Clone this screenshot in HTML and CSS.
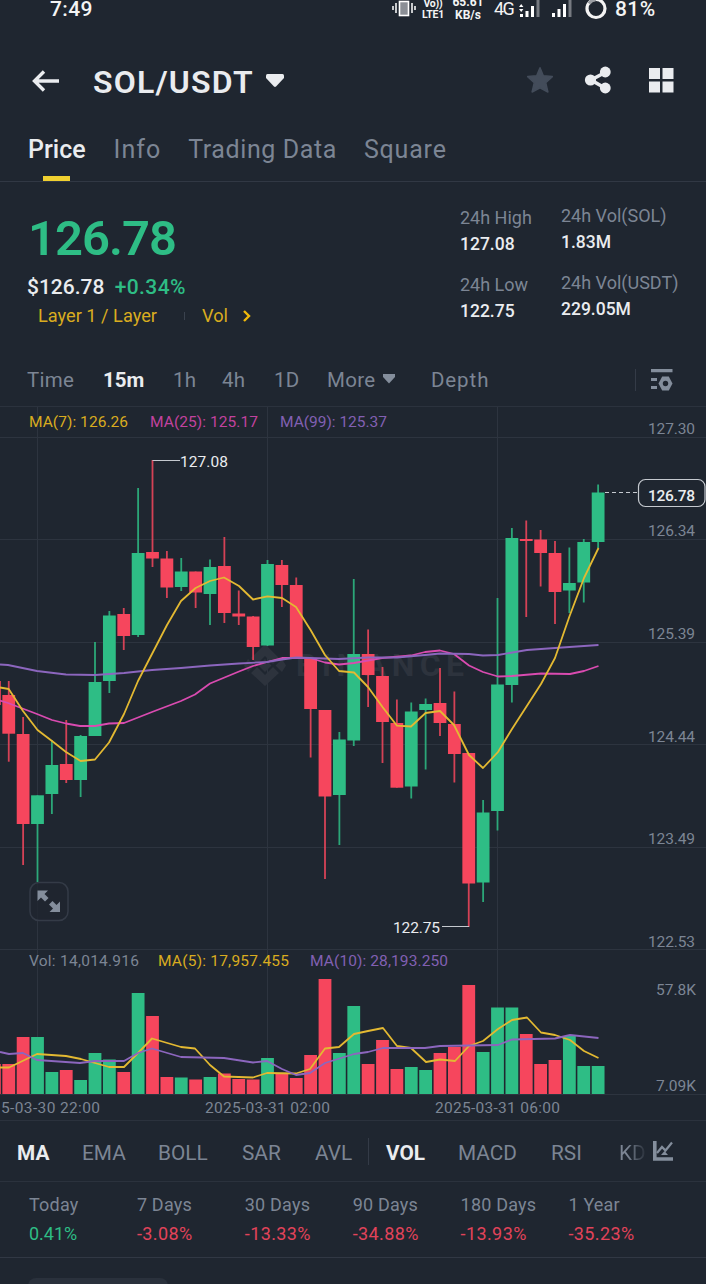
FILE: index.html
```html
<!DOCTYPE html>
<html lang="en">
<head>
    <meta charset="UTF-8">
    <meta name="viewport" content="width=device-width, initial-scale=1.0">
    <title>SOL/USDT</title>
    <link rel="stylesheet" href="styles.css">
</head>
<body>
    <div class="status-bar">
        <span class="clock">7:49</span>
        <div class="status-icons">
            <svg class="vibrate" width="24" height="18" viewBox="0 0 24 18">
                <rect x="7.5" y="1.5" width="9" height="14" fill="#8b8f96" stroke="#fff" stroke-width="1.6"/>
                <path d="M1 6v4M4 3v10M20 3v10M23 6v4" stroke="#fff" stroke-width="1.5"/>
            </svg>
            <div class="stack volte"><span>Vo))</span><span>LTE1</span></div>
            <div class="stack speed"><span>65.61</span><span>KB/s</span></div>
            <span class="net">4G</span>
            <svg class="signal" width="21" height="18" viewBox="0 0 21 18">
                <path d="M0 7l2.2-3 2.2 3zM0 9l2.2 3 2.2-3z" fill="#fff"/>
                <path d="M1 14h3v3H1zM6.500 11h3v6h-3zM12 6h3v11h-3z" fill="#fff"/>
                <path d="M17.500 0h3v17h-3z" fill="#767a81"/>
            </svg>
            <svg class="signal" width="21" height="18" viewBox="0 0 21 18">
                <path d="M1 13h3v4H1zM6.500 9h3v8h-3zM12 4h3v13h-3z" fill="#fff"/>
                <path d="M17.500 0h3v17h-3z" fill="#767a81"/>
            </svg>
            <svg class="battery" width="22" height="22" viewBox="0 0 22 22">
                <circle cx="11" cy="10.500" r="9" fill="none" stroke="#f4f4f4" stroke-width="3.2"/>
                <path d="M11 1.500a9 9 0 0 0-7 4" fill="none" stroke="#9a9da2" stroke-width="3.2"/>
            </svg>
            <span class="percent">81%</span>
        </div>
    </div>

    <header class="header">
        <svg class="back" width="28" height="22" viewBox="0 0 28 22">
            <path d="M27 11H2.500M12 1.500L2.500 11l9.500 9.500" fill="none" stroke="#eaecef" stroke-width="3.4"/>
        </svg>
        <h1>SOL/USDT</h1>
        <svg class="caret" width="18" height="14" viewBox="0 0 18 14">
            <path d="M1.500 0h15q1.500 0 1.500 1.500v2.500L10 12.500q-1 .8-2 0L0 4V1.500Q0 0 1.500 0z" fill="#eaecef"/>
        </svg>
        <div class="actions">
            <svg width="28" height="28" viewBox="0 0 28 28">
                <path d="M14 1.800l3.300 8 9 .800-6.600 6.100 2.200 9.300-7.900-4.200L6.100 26l2.200-9.300-6.600-6.100 9-.800z" fill="#434c5a" stroke="#434c5a" stroke-width="1.500" stroke-linejoin="round"/>
            </svg>
            <svg width="28" height="28" viewBox="0 0 28 28">
                <path d="M21 6.500L7 14l14 8" fill="none" stroke="#eaecef" stroke-width="3.6"/>
                <circle cx="21.300" cy="6" r="5.400" fill="#eaecef"/>
                <circle cx="6.500" cy="14" r="5.600" fill="#eaecef"/>
                <circle cx="21.300" cy="22" r="5.400" fill="#eaecef"/>
            </svg>
            <svg width="26" height="26" viewBox="0 0 26 26">
                <path d="M1 1h11v11H1zM14.500 1h11v11h-11zM1 14.500h11v11H1zM14.500 14.500h11v11h-11z" fill="#eaecef"/>
            </svg>
        </div>
    </header>

    <nav class="tabs">
        <a class="active">Price</a>
        <a>Info</a>
        <a>Trading Data</a>
        <a>Square</a>
    </nav>

    <section class="overview">
        <div class="price-box">
            <div class="price">126.78</div>
            <div class="fiat"><span>$126.78</span> <span class="up">+0.34%</span></div>
            <div class="tags">
                <span>Layer 1 / Layer</span>
                <i></i>
                <span>Vol</span>
                <svg width="8" height="12" viewBox="0 0 8 12"><path d="M1 1l5 5-5 5" fill="none" stroke="#f0b90b" stroke-width="2.4"/></svg>
            </div>
        </div>
        <div class="stats">
            <dl><dt>24h High</dt><dd>127.08</dd></dl>
            <dl><dt>24h Low</dt><dd>122.75</dd></dl>
        </div>
        <div class="stats vol">
            <dl><dt>24h Vol(SOL)</dt><dd>1.83M</dd></dl>
            <dl><dt>24h Vol(USDT)</dt><dd>229.05M</dd></dl>
        </div>
    </section>

    <div class="intervals">
        <a>Time</a>
        <a class="active">15m</a>
        <a>1h</a>
        <a>4h</a>
        <a>1D</a>
        <a>More <svg width="12" height="10" viewBox="0 0 12 10"><path d="M0 0h12v3L6 9.500 0 3z" fill="#848e9c"/></svg></a>
        <a>Depth</a>
        <div class="settings">
            <svg width="22" height="22" viewBox="0 0 22 22">
                <path d="M0 0h21.500v3.200H0zM0 9h6v3H0zM0 17h6v3H0z" fill="#848e9c"/>
                <path d="M11.200 7.500h6.600l3.700 7-3.700 7h-6.600l-3.700-7z" fill="#848e9c"/>
                <circle cx="14.500" cy="14.500" r="2.700" fill="#1f2630"/>
            </svg>
        </div>
    </div>

    <div class="chart">
        <svg id="chart" width="706" height="713" viewBox="0 407 706 713"></svg>
    </div>

    <div class="indicators">
        <a class="active">MA</a>
        <a>EMA</a>
        <a>BOLL</a>
        <a>SAR</a>
        <a>AVL</a>
        <a class="active sub">VOL</a>
        <a>MACD</a>
        <a>RSI</a>
        <a class="fade">KD</a>
        <svg width="20" height="20" viewBox="0 0 20 20">
            <path d="M1.800 0v18H20" fill="none" stroke="#848e9c" stroke-width="3.6"/>
            <path d="M4 12l5-6 3.500 3.500L19 1.500" fill="none" stroke="#848e9c" stroke-width="2.200"/>
            <path d="M8 14l3.500-4 3.500 4z" fill="#848e9c"/>
        </svg>
    </div>

    <div class="performance">
        <div><span>Today</span><b class="up">0.41%</b></div>
        <div><span>7 Days</span><b>-3.08%</b></div>
        <div><span>30 Days</span><b>-13.33%</b></div>
        <div><span>90 Days</span><b>-34.88%</b></div>
        <div><span>180 Days</span><b>-13.93%</b></div>
        <div><span>1 Year</span><b>-35.23%</b></div>
    </div>

    <div class="bottom"><div class="chip"></div></div>

    <script>
        const step = 14.375;
        const firstX = 8.75;
        const volumeBase = 1094;

        // [direction, high, body top, body bottom, low, volume top]
        const candles = [
            ['d', 681, 695, 733.7, 761.7, 1064],
            ['d', 717, 734, 824, 865, 1037],
            ['u', 795.3, 795.3, 824, 882, 1037],
            ['u', 740, 765, 794, 814, 1072],
            ['d', 720, 764, 780, 783, 1070],
            ['u', 735, 736, 780, 797, 1080],
            ['u', 642, 682, 736, 736, 1053],
            ['u', 611, 615.5, 681, 693, 1059.5],
            ['d', 608, 614, 636, 650, 1072],
            ['u', 488, 553, 635, 637, 993],
            ['d', 460, 552, 558.5, 567, 1016],
            ['d', 551, 558.5, 587.5, 598, 1077],
            ['u', 558, 571.5, 587, 591, 1077.5],
            ['d', 571.5, 571.5, 592.5, 608, 1079.5],
            ['u', 559.5, 567, 594, 625, 1077],
            ['d', 537, 566, 613, 623, 1073.5],
            ['d', 590.5, 613.5, 616.5, 625, 1079],
            ['d', 616, 616.5, 647, 660, 1079.5],
            ['u', 560, 564, 645.5, 646, 1058],
            ['d', 560, 565, 585, 607, 1073.5],
            ['d', 577.5, 585, 658, 658, 1078],
            ['d', 658, 658, 709, 757.5, 1055],
            ['d', 710, 710, 796.5, 879, 979],
            ['u', 732, 739.5, 795, 845, 1053],
            ['u', 579, 654, 740.5, 746, 1006],
            ['d', 629.5, 654, 675, 707, 1064],
            ['d', 667, 676, 722, 763, 1040],
            ['d', 699.5, 723, 787.7, 787.7, 1069],
            ['u', 702.5, 711.5, 786.5, 798.5, 1067],
            ['u', 698.5, 704, 710, 769.5, 1070],
            ['d', 668, 703, 723, 736, 1053],
            ['d', 691.5, 724, 754, 782.5, 1047],
            ['d', 753, 753, 883.5, 927, 985],
            ['u', 800, 812.5, 882.5, 902, 1052],
            ['u', 598, 684.5, 811, 830.5, 1007.5],
            ['u', 528, 538, 685, 702.5, 1007.5],
            ['d', 520.5, 539, 541, 617, 1034],
            ['d', 530, 539.5, 553, 586.5, 1064],
            ['d', 541, 553, 592, 624, 1060],
            ['u', 547.5, 583, 590.5, 613, 1036],
            ['u', 539, 542, 582.5, 602.5, 1066],
            ['u', 484.5, 492.5, 542, 548, 1066]
        ];

        const lines = {
            ma7: '0,687.5 8.7,689 23,711 37.5,730 52,741 66,752 80.6,761 95,759.5 109,742.5 124,714 138,681 152.5,653 167,625 181,601 195.6,588 210,581 224,577.5 239,586 253,599.5 267.5,596.3 282,598 296,607 310.6,630 325,655 339,671 354,672.5 368,687 382.5,707 397,725.7 411,726.5 425.6,713 440,711 454,725 469,755 483,768 498,752 512,729 541,684 555,658 569.6,616 584,578 598.5,548',
            ma25: '0,700.5 8,703 37,714 52,720 66,723.5 80,726 95,726 109,723.5 124,723 152,712 181,701 195,694.5 210,683.5 239,671.5 253,666 267,662 282,658 310,658 325,662.5 339,664.5 354,663 382,658 411,655.5 425,652 440,650.5 454,654 469,665.5 483,672 498,676.5 512,676 541,673.5 570,674 584,671 598.5,666',
            ma99: '0,664.5 8,665 37,671 66,674.5 95,675 124,673 152,670 181,668 210,665.5 239,663.5 267,662 282,659.5 296,657.5 310,658 339,659 368,657.5 397,657.5 425,655 440,653.5 469,654 483,655.5 498,655 527,650 555,648 584,646 598.5,645',
            ma5v: '0,1067.5 9,1067.5 37,1054 66,1056 81,1059 109,1067 124,1067 138,1053 152,1038.5 181,1047 195,1048.5 210,1065 224,1076.5 253,1077.5 267,1073 296,1073.5 310,1069 325,1048.5 339,1047 354,1034 368,1031 383,1028 397,1046 411,1048 426,1062 440,1059.5 455,1061 469,1046 483,1041 498,1029 512,1020 527,1017.5 541,1032.5 555,1035 570,1040 584,1051 598.5,1058',
            ma10v: '0,1052 9,1054 23,1053 37,1060 80,1063 95,1061 124,1061 138,1053 152,1048.5 181,1057 224,1058 253,1062.5 267,1061 282,1069 296,1075 310,1073 325,1063 354,1054 368,1052 383,1048 425,1048 440,1046 498,1045 512,1039.5 555,1038.5 570,1035 598.5,1038'
        };

        // [x, baseline, width, class, text]
        const labels = [
            [29, 427, 99, 'yellow', 'MA(7): 126.26'],
            [150, 427, 108, 'pink', 'MA(25): 125.17'],
            [280, 427, 107, 'purple', 'MA(99): 125.37'],
            [648, 433.5, 47, 'axis', '127.30'],
            [648, 536, 47, 'axis', '126.34'],
            [648, 639, 47, 'axis', '125.39'],
            [648, 741.5, 47, 'axis', '124.44'],
            [648, 844, 47, 'axis', '123.49'],
            [648, 946.5, 47, 'axis', '122.53'],
            [656, 995, 40, 'axis', '57.8K'],
            [656, 1090.5, 40, 'axis', '7.09K'],
            [180, 467, 48, 'light', '127.08'],
            [393, 933, 47, 'light', '122.75'],
            [29, 966, 110, 'axis', 'Vol: 14,014.916'],
            [158, 966, 131, 'yellow', 'MA(5): 17,957.455'],
            [310, 966, 138, 'purple', 'MA(10): 28,193.250'],
            [1, 1113, 99, 'axis', '5-03-30 22:00'],
            [205, 1113, 125, 'axis', '2025-03-31 02:00'],
            [435, 1113, 125, 'axis', '2025-03-31 06:00']
        ];

        let out = '';
        [437.5, 539.5, 642.5, 744.5, 847.5, 949.5, 1094.5].forEach(y => {
            out += `<path class="grid" d="M0 ${y}H706"/>`;
        });
        [37.5, 267.5, 497.5].forEach(x => {
            out += `<path class="grid" d="M${x} 407V1094"/>`;
        });

        // watermark
        out += `<g class="watermark">
            <path d="M265 644l14 14-6 6-8-8-8 8-6-6zM248 659l6.500 6.500-6.500 6.500-4-6.500zM265 659l6.500 6.500-6.500 6.500-6.500-6.500zM282 659l4 6.500-4 6.500-6.500-6.500zM251 673l6-6 8 8 8-8 6 6-14 13z"/>
            <text x="296" y="676" textLength="168">BINANCE</text>
        </g>`;

        out += '<path class="d" d="M0 681h.8v24H0z"/><path class="d" d="M0 1064h.8v30H0z"/>';
        candles.forEach(([dir, high, top, bottom, low, vol], i) => {
            const x = firstX + step * i;
            out += `<rect class="${dir} wick" x="${x - 0.9}" y="${high}" width="1.8" height="${low - high}"/>`;
            out += `<rect class="${dir}" x="${x - 6.4}" y="${top}" width="12.8" height="${bottom - top}"/>`;
            out += `<rect class="${dir}" x="${x - 6.4}" y="${vol}" width="12.8" height="${volumeBase - vol}"/>`;
        });

        out += `<polyline class="line pink" points="${lines.ma25}"/>`;
        out += `<polyline class="line purple" points="${lines.ma99}"/>`;
        out += `<polyline class="line yellow" points="${lines.ma7}"/>`;
        out += `<polyline class="line yellow" points="${lines.ma5v}"/>`;
        out += `<polyline class="line purple" points="${lines.ma10v}"/>`;

        // high / low pointers and current price
        out += '<path class="pointer" d="M152.500 460.500H180M442 926.500H469"/>';
        out += '<path class="pointer" stroke-dasharray="4 3" d="M605 492.500H638"/>';
        out += '<rect class="tag" x="638.5" y="479.500" width="66.500" height="27" rx="7"/>';
        out += '<text class="label current" x="648" y="501" textLength="47">126.78</text>';

        labels.forEach(([x, y, w, cls, text]) => {
            out += `<text class="label ${cls}" x="${x}" y="${y}" textLength="${w}">${text}</text>`;
        });

        // full screen button
        out += `<rect class="expand" x="30" y="882.500" width="38" height="38" rx="9"/>
            <path class="arrows" d="M37.500 890.500h10.500l-3.500 3.500 4 4-3.500 3.500-4-4-3.500 3.500zM60 912H49.500l3.500-3.500-4-4 3.500-3.500 4 4 3.500-3.500z"/>`;

        document.getElementById('chart').innerHTML = out;
    </script>
</body>
</html>
```
FILE: styles.css
```css
* {
    box-sizing: border-box;
}
body {
    font-family: Roboto, "Liberation Sans", sans-serif;
    margin: 0;
    height: 1284px;
    overflow: hidden;
    background-color: #1f2630;
    color: #eaecef;
}
svg {
    display: block;
    flex: none;
}

/* Status bar */
.status-bar {
    display: flex;
    justify-content: space-between;
    height: 40px;
    padding: 0 50px 0 50px;
    color: #f4f4f4;
}
.clock, .net, .percent {
    font-size: 21px;
    line-height: 19px;
    font-weight: 500;
}
.clock {
    letter-spacing: 0.4px;
}
.status-icons {
    display: flex;
    align-items: flex-start;
}
.stack {
    display: flex;
    flex-direction: column;
    font-weight: 700;
    text-align: center;
}
.volte {
    width: 24px;
    margin: -2px 0 0 5px;
    font-size: 10.5px;
    line-height: 11px;
    letter-spacing: -0.2px;
}
.speed {
    width: 34px;
    margin: -4px 0 0 6px;
    font-size: 12px;
    line-height: 13px;
}
.net {
    margin-left: 9px;
    width: 20px;
    font-size: 18px;
    line-height: 18px;
    font-weight: 400;
    letter-spacing: -1.5px;
}
.signal {
    margin-left: 5px;
}
.signal + .signal {
    margin-left: 11px;
}
.battery {
    margin: -2px 0 0 13px;
}
.percent {
    width: 41px;
    margin-left: 8px;
    letter-spacing: 0.4px;
}

/* Header */
.header {
    display: flex;
    align-items: center;
    height: 81px;
    padding: 0 32px;
}
.header h1 {
    margin: 2px 0 0 33px;
    width: 160px;
    font-size: 32px;
    font-weight: 600;
    letter-spacing: 1.2px;
}
.caret {
    margin-left: 13px;
}
.actions {
    display: flex;
    align-items: center;
    gap: 30px;
    margin: -1px 0 0 auto;
}
.actions svg:last-child {
    margin-left: 6px;
}

/* Tabs */
.tabs {
    display: flex;
    height: 61px;
    padding-left: 28px;
    border-bottom: 1px solid #313844;
}
.tabs a {
    position: relative;
    line-height: 57px;
    font-size: 25px;
    color: #7c8594;
    margin-right: 27px;
    letter-spacing: 0.6px;
    white-space: nowrap;
}
.tabs a:nth-child(2) {
    letter-spacing: 1px;
}
.tabs a:last-child {
    letter-spacing: 0.8px;
    margin-right: 0;
}
.tabs .active {
    color: #eaecef;
    font-weight: 500;
    letter-spacing: 0;
    margin-right: 28px;
}
.tabs .active::after {
    content: "";
    position: absolute;
    left: 15px;
    bottom: 0;
    width: 27px;
    height: 5px;
    background-color: #f0d030;
}

/* Price and 24h numbers */
.overview {
    display: flex;
    height: 172px;
    padding: 22px 0 0 28px;
}
.up {
    color: #2ebd85;
}
.price-box {
    width: 432px;
}
.price {
    font-size: 49px;
    line-height: 69px;
    height: 68px;
    font-weight: 600;
    color: #2ebd85;
    letter-spacing: -1px;
}
.fiat {
    margin-left: -1px;
    font-size: 21px;
    line-height: 30px;
    font-weight: 500;
}
.fiat .up {
    margin-left: 5px;
    letter-spacing: 0.4px;
}
.tags {
    display: flex;
    align-items: center;
    padding: 1px 0 0 10px;
    font-size: 18.2px;
    line-height: 26px;
    color: #d9ac1f;
}
.tags i {
    width: 1px;
    height: 8px;
    margin: 0 17px 0 27px;
    background-color: #3a424e;
}
.tags svg {
    margin-left: 15px;
}
.stats {
    width: 101px;
    padding-top: 1px;
}
.stats.vol {
    padding-top: 0;
    margin-top: -1px;
    width: 140px;
}
.stats dl {
    margin: 0 0 14px;
}
.stats dt {
    font-size: 18px;
    line-height: 26px;
    color: #7c8594;
    white-space: nowrap;
}
.stats dd {
    margin: 0;
    font-size: 17.5px;
    line-height: 27px;
    font-weight: 500;
}

/* Chart intervals */
.intervals {
    display: grid;
    grid-template-columns: 76px 70px 49px 52px 53px 104px 204px 44px;
    align-items: center;
    height: 53px;
    padding-left: 27px;
    border-bottom: 1px solid #2b323d;
    font-size: 20.5px;
    letter-spacing: 0.3px;
    color: #7c8594;
}
.intervals a {
    display: flex;
    gap: 8px;
}
.intervals a:nth-child(7) {
    letter-spacing: 0.9px;
}
.intervals a svg {
    margin-top: 6px;
}
.intervals .active {
    color: #eaecef;
    font-weight: 700;
    letter-spacing: 0;
}
.settings {
    padding-left: 15px;
    border-left: 1px solid #343b47;
}

/* Candles and volume, drawn by the script */
.chart {
    height: 713px;
}
.grid {
    stroke: #2d343f;
    stroke-width: 1;
}
.u {
    fill: #2ebd85;
}
.d {
    fill: #f6465d;
}
.wick {
    opacity: 0.85;
}
.line {
    fill: none;
    stroke-width: 1.8;
    stroke-linejoin: round;
}
.line.yellow {
    stroke: #e3b932;
}
.line.pink {
    stroke: #d94bb0;
}
.line.purple {
    stroke: #8c66be;
}
.label {
    font-size: 15.5px;
    fill: #7c8594;
}
.label.yellow {
    fill: #d9ac1f;
}
.label.pink {
    fill: #c2429f;
}
.label.purple {
    fill: #8260b3;
}
.label.light, .label.current {
    fill: #eaecef;
}
.label.current {
    font-weight: 500;
}
.watermark {
    fill: #2d333d;
}
.watermark text {
    font-size: 32px;
    font-weight: 700;
}
.pointer {
    fill: none;
    stroke: #c5c9cf;
    stroke-width: 1.2;
}
.tag {
    fill: #1f2630;
    stroke: #c5c9cf;
    stroke-width: 1.2;
}
.expand {
    fill: #1f2630;
    fill-opacity: 0.8;
    stroke: #343b47;
    stroke-width: 1.5;
}
.arrows {
    fill: #848e9c;
}

/* Indicator row */
.indicators {
    display: grid;
    grid-template-columns: 65px 76px 84px 73px 71px 72px 93px 68px 34px 20px;
    align-items: center;
    height: 62px;
    padding-left: 17px;
    border-top: 1px solid #2b323d;
    border-bottom: 1px solid #2b323d;
    font-size: 20.8px;
    color: #7c8594;
}
.indicators a {
    padding-top: 3px;
}
.indicators .active {
    color: #eaecef;
    font-weight: 700;
}
.indicators .sub {
    margin-left: -18px;
    padding-left: 17px;
    border-left: 1px solid #343b47;
}
.indicators .fade {
    width: 27px;
    background: linear-gradient(90deg, #7c8594 30%, #262d37);
    -webkit-background-clip: text;
    background-clip: text;
    color: transparent;
}

/* Performance */
.performance {
    display: grid;
    grid-template-columns: repeat(6, 107.9px);
    height: 76px;
    padding: 8px 0 0 29px;
    border-bottom: 1px solid #313844;
    font-size: 18px;
    line-height: 29px;
    color: #7c8594;
}
.performance span, .performance b {
    display: block;
}
.performance span {
    letter-spacing: 0.2px;
}
.performance b {
    font-weight: 400;
    letter-spacing: 0.4px;
    color: #e2435a;
}
.performance b.up {
    color: #2ebd85;
    letter-spacing: 0;
}
.bottom {
    padding: 20px 0 0 28px;
}
.chip {
    width: 140px;
    height: 30px;
    border-radius: 8px;
    background-color: #2a313c;
}
```
